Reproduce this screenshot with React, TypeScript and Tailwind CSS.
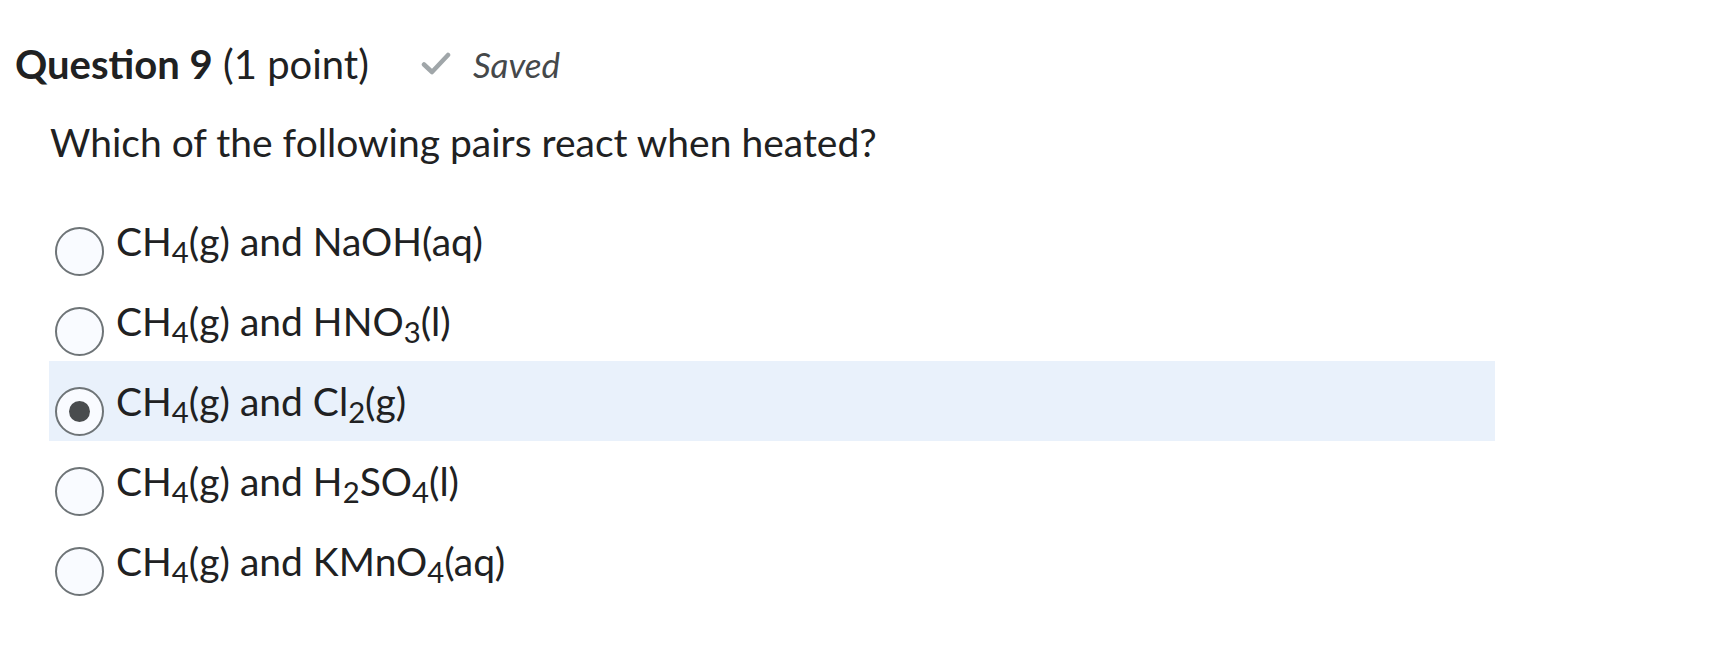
import React, { useState } from 'react'

type Choice = { id: string; label: React.ReactNode }

const CHOICES: Choice[] = [
    { id: 'a', label: <>CH<sub>4</sub>(g) and NaOH(aq)</> },
    { id: 'b', label: <>CH<sub>4</sub>(g) and HNO<sub>3</sub>(l)</> },
    { id: 'c', label: <>CH<sub>4</sub>(g) and Cl<sub>2</sub>(g)</> },
    { id: 'd', label: <>CH<sub>4</sub>(g) and H<sub>2</sub>SO<sub>4</sub>(l)</> },
    { id: 'e', label: <>CH<sub>4</sub>(g) and KMnO<sub>4</sub>(aq)</> },
]

function Radio({ checked }: { checked: boolean }) {
    return (
        <span className="mt-[26px] flex h-[49px] w-[49px] shrink-0 items-center justify-center rounded-full border-2 border-[#6e7477] bg-[#f9fbff]">
            {checked && <span className="h-[21px] w-[21px] rounded-full bg-[#494c4e]" />}
        </span>
    )
}

export default function App() {
    const [selected, setSelected] = useState('c')

    return (
        <div className="min-h-[647px] w-[1710px] bg-white font-['Lato',sans-serif] text-[#202122]">
            {/* Header */}
            <div className="flex items-center pl-[15px] pt-[38px]">
                <h2 className="text-[40px] leading-[50px]">
                    <span className="font-bold">Question 9</span> (1 point)
                </h2>
                <div className="ml-[52px] flex items-center gap-[22px] text-[#45484a]">
                    <svg width="30" height="24" viewBox="0 0 30 24" className="text-[#a0a6a9]">
                        <path d="M3 12.5 L11 20 L27 3" fill="none" stroke="currentColor" strokeWidth="4.5" strokeLinecap="round" strokeLinejoin="round" />
                    </svg>
                    <span className="text-[35px] italic">Saved</span>
                </div>
            </div>

            {/* Question body */}
            <p className="pl-[50px] pt-[26px] text-[39px] leading-[50px]">Which of the following pairs react when heated?</p>

            <ul className="mt-[34px] ml-[49px] w-[1446px] pl-0">
                {CHOICES.map((c) => (
                    <li
                        key={c.id}
                        onClick={() => setSelected(c.id)}
                        className={
                            'flex h-[80px] cursor-pointer items-start gap-[12px] pl-[6px] ' +
                            (selected === c.id ? 'bg-[#e9f1fb]' : '')
                        }
                    >
                        <Radio checked={selected === c.id} />
                        <span className="pt-[17px] text-[39px] leading-[46px]">{c.label}</span>
                    </li>
                ))}
            </ul>
        </div>
    )
}
